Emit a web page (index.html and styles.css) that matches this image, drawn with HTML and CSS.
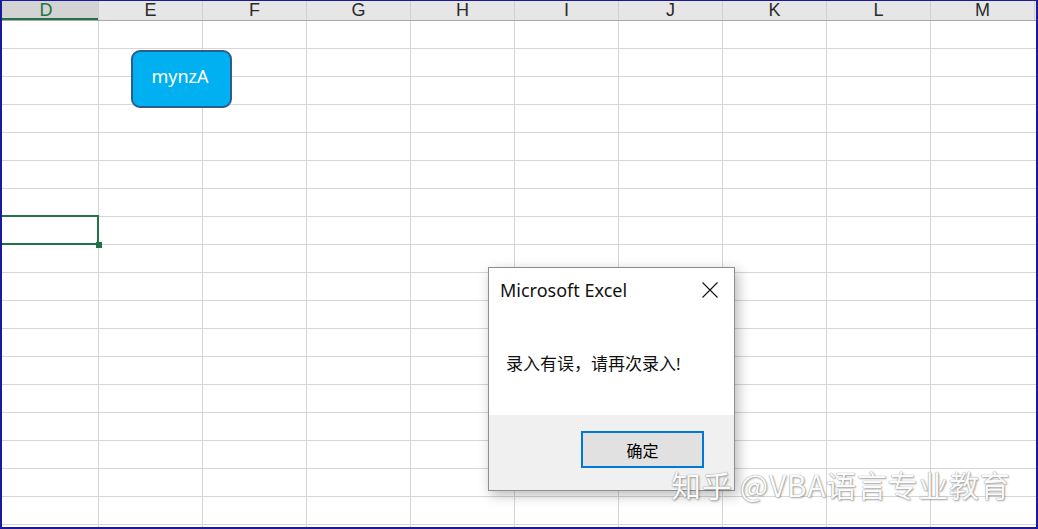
FILE: index.html
```html
<!DOCTYPE html>
<html lang="zh-CN">
<head>
<meta charset="UTF-8" />
<meta name="viewport" content="width=device-width, initial-scale=1" />
<title>Microsoft Excel</title>
<link rel="stylesheet" href="styles.css">
</head>
<body>

<div class="frame">
  <!-- column headers -->
  <div class="col-heads">
    <div class="col-head first active">D</div>
    <div class="col-head">E</div>
    <div class="col-head">F</div>
    <div class="col-head">G</div>
    <div class="col-head">H</div>
    <div class="col-head">I</div>
    <div class="col-head">J</div>
    <div class="col-head">K</div>
    <div class="col-head">L</div>
    <div class="col-head">M</div>
    <div class="col-head rest"></div>
  </div>

  <div class="cells"></div>

  <!-- shape button -->
  <div class="shape">mynzA</div>

  <!-- active cell -->
  <div class="selection"><span class="fill-handle"></span></div>

  <!-- msgbox -->
  <div class="dialog">
    <div class="dlg-title">
      <span>Microsoft Excel</span>
      <svg class="dlg-close" width="16" height="16" viewBox="0 0 16 16">
        <path d="M0.5 0.5 L15.5 15.5 M15.5 0.5 L0.5 15.5" stroke="#111" stroke-width="1.1" fill="none"/>
      </svg>
    </div>
    <div class="dlg-msg">录入有误，请再次录入!</div>
    <div class="dlg-foot">
      <button class="dlg-btn">确定</button>
    </div>
  </div>

  <div class="watermark">知乎 @VBA语言专业教育</div>
</div>

</body>
</html>
```

FILE: styles.css
```css
html, body {
  margin: 0;
  padding: 0;
  height: 100%;
  overflow: hidden;
  background: #fff;
  font-family: "Noto Sans", "Noto Sans CJK SC", sans-serif;
}

.frame {
  position: relative;
  width: 1034px;
  height: 526px;
  border: 2px solid #1a1a9a;
  border-top-width: 1px;
  overflow: hidden;
}

/* column headers */
.col-heads {
  display: flex;
  height: 19px;
  background: #e6e6e6;
  border-bottom: 1px solid #a8a8a8;
}

.col-head {
  flex: 0 0 103px;
  border-right: 1px solid #d0d0d0;
  text-align: center;
  font: 18px/19px "Liberation Sans", Arial, sans-serif;
  color: #2b2b2b;
}

.col-head.first { flex-basis: 88px; padding-right: 8px; }
.col-head.rest { flex: 1; border-right: none; }

.col-head.active {
  background: #d3d3d3;
  color: #217346;
  box-shadow: inset 0 -2px #217346;
}

/* grid lines */
.cells {
  height: calc(100% - 20px);
  background-image:
    repeating-linear-gradient(to right, transparent 0 103px, #d6d6d6 103px 104px),
    repeating-linear-gradient(to bottom, transparent 0 27px, #d6d6d6 27px 28px);
  background-position: -7px 0, 0 0;
}

.shape {
  position: absolute;
  left: 129px;
  top: 49px;
  width: 101px;
  height: 58px;
  box-sizing: border-box;
  border: 2px solid #2c5d8f;
  border-radius: 9px;
  background: #00b0f0;
  color: #fff;
  font-size: 18px;
  display: flex;
  align-items: center;
  justify-content: center;
  padding: 0 3px 6px 0;
}

.selection {
  position: absolute;
  left: -4px;
  top: 214px;
  width: 101px;
  height: 30px;
  box-sizing: border-box;
  border: 2px solid #217346;
}

.fill-handle {
  position: absolute;
  right: -5px;
  bottom: -5px;
  width: 6px;
  height: 6px;
  background: #217346;
}

/* msgbox */
.dialog {
  position: absolute;
  left: 486px;
  top: 266px;
  width: 247px;
  height: 224px;
  box-sizing: border-box;
  border: 1px solid #8e8e8e;
  background: #fff;
  box-shadow: 3px 4px 12px rgba(0,0,0,0.28);
  display: flex;
  flex-direction: column;
}

.dlg-title {
  display: flex;
  justify-content: space-between;
  align-items: center;
  padding: 10px 16px 0 11px;
  height: 24px;
  font-size: 18px;
  line-height: 24px;
  color: #111;
}

.dlg-close { display: block; }

.dlg-msg {
  flex: 1;
  padding: 50px 0 0 17px;
  font-size: 17px;
  line-height: 24px;
  color: #111;
}

.dlg-foot {
  height: 75px;
  box-sizing: border-box;
  background: #f0f0f0;
  display: flex;
  justify-content: flex-end;
  align-items: flex-start;
  padding: 16px 30px 0 0;
}

.dlg-btn {
  width: 123px;
  height: 37px;
  box-sizing: border-box;
  border: 2px solid #0078d7;
  background: #e1e1e1;
  font-family: "Noto Sans CJK SC", sans-serif;
  font-size: 16px;
  color: #000;
  padding: 0;
}

.watermark {
  position: absolute;
  left: 669px;
  top: 467px;
  font-family: "Noto Sans CJK SC", sans-serif;
  font-size: 30px;
  line-height: 32px;
  letter-spacing: 0.7px;
  white-space: nowrap;
  color: #fafafa;
  text-shadow: 0 0 1px #6e6e6e, 1px 1px 2px rgba(0,0,0,0.35);
}
```
